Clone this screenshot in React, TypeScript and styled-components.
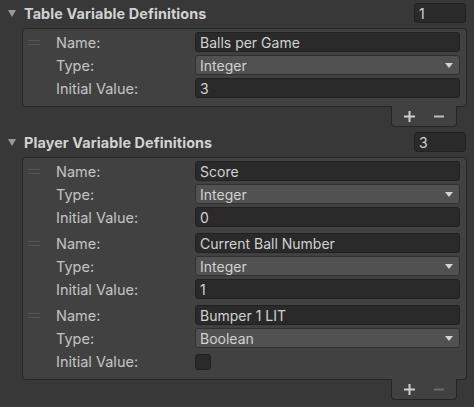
import React from 'react';
import styled, { createGlobalStyle } from 'styled-components';

type VarType = 'Integer' | 'Boolean';

interface Variable {
  name: string;
  type: VarType;
  value: string | boolean;
}

const tableVars: Variable[] = [
  { name: 'Balls per Game', type: 'Integer', value: '3' },
];

const playerVars: Variable[] = [
  { name: 'Score', type: 'Integer', value: '0' },
  { name: 'Current Ball Number', type: 'Integer', value: '1' },
  { name: 'Bumper 1 LIT', type: 'Boolean', value: false },
];

const GlobalStyle = createGlobalStyle`
  html, body {
    margin: 0;
    padding: 0;
    background: #383838;
  }
  body {
    font-family: Inter, "Noto Sans", "Liberation Sans", sans-serif;
    font-size: 14px;
    color: #c4c4c4;
  }
`;

const Foldout: React.FC = () => (
  <svg width="8" height="7" viewBox="0 0 8 7">
    <polygon points="0,0 8,0 4,7" fill="#9a9a9a" />
  </svg>
);

const Handle: React.FC = () => (
  <svg width="12" height="5" viewBox="0 0 12 5">
    <rect x="0" y="0" width="12" height="1" fill="#575757" />
    <rect x="0" y="4" width="12" height="1" fill="#575757" />
  </svg>
);

const Caret: React.FC = () => (
  <svg width="8" height="5" viewBox="0 0 8 5">
    <polygon points="0,0 8,0 4,5" fill="#d4d4d4" />
  </svg>
);

const PlusIcon: React.FC<{ color: string }> = ({ color }) => (
  <svg width="11" height="11" viewBox="0 0 11 11">
    <rect x="0" y="4.5" width="11" height="2" fill={color} />
    <rect x="4.5" y="0" width="2" height="11" fill={color} />
  </svg>
);

const MinusIcon: React.FC<{ color: string }> = ({ color }) => (
  <svg width="10" height="11" viewBox="0 0 10 11">
    <rect x="0" y="4.5" width="10" height="2" fill={color} />
  </svg>
);

const VariableList: React.FC<{ title: string; items: Variable[]; canRemove: boolean }> = ({
  title,
  items,
  canRemove,
}) => (
  <Section>
    <Header>
      <FoldoutIcon>
        <Foldout />
      </FoldoutIcon>
      <HeaderTitle>{title}</HeaderTitle>
      <CountField>{items.length}</CountField>
    </Header>
    <ListBody>
      {items.map((item) => (
        <Element key={item.name}>
          <HandleCell>
            <Handle />
          </HandleCell>
          <Label>Name:</Label>
          <TextField>{item.name}</TextField>
          <span />
          <Label>Type:</Label>
          <Dropdown>
            <span>{item.type}</span>
            <Caret />
          </Dropdown>
          <span />
          <Label>Initial Value:</Label>
          {item.type === 'Boolean' ? (
            <CheckCell>
              <Checkbox />
            </CheckCell>
          ) : (
            <TextField>{item.value as string}</TextField>
          )}
        </Element>
      ))}
    </ListBody>
    <FooterRow>
      <Footer>
        <FooterButton>
          <PlusIcon color="#cfcfcf" />
        </FooterButton>
        <FooterButton>
          <MinusIcon color={canRemove ? '#bdbdbd' : '#6c6c6c'} />
        </FooterButton>
      </Footer>
    </FooterRow>
  </Section>
);

const App: React.FC = () => (
  <>
    <GlobalStyle />
    <Inspector>
      <VariableList title="Table Variable Definitions" items={tableVars} canRemove />
      <VariableList title="Player Variable Definitions" items={playerVars} canRemove={false} />
    </Inspector>
  </>
);

export default App;

const Inspector = styled.div`
  width: 474px;
  height: 407px;
  box-sizing: border-box;
  padding: 3px 7px 0 0;
  display: flex;
  flex-direction: column;
  gap: 5px;
  overflow: hidden;
`;

const Section = styled.section`
  display: flex;
  flex-direction: column;
`;

const Header = styled.div`
  height: 20px;
  display: flex;
  align-items: center;
  margin-bottom: 5px;
`;

const FoldoutIcon = styled.div`
  width: 8px;
  margin-left: 8px;
  margin-right: 8px;
  display: flex;
  align-items: center;
  padding-top: 1px;
`;

const HeaderTitle = styled.div`
  flex: 1;
  font-weight: 700;
  font-size: 14.4px;
  color: #d2d2d2;
  letter-spacing: 0.1px;
`;

const CountField = styled.div`
  width: 52px;
  height: 20px;
  box-sizing: border-box;
  margin-right: 1px;
  padding: 0 4px;
  background: #2a2a2a;
  border: 1px solid #212121;
  border-radius: 3px;
  color: #d2d2d2;
  display: flex;
  align-items: center;
`;

const ListBody = styled.div`
  margin-left: 22px;
  background: #414141;
  border: 1px solid #252525;
  border-radius: 4px;
  padding-bottom: 5px;
`;

const Element = styled.div`
  display: grid;
  grid-template-columns: 33px 139px 1fr;
  grid-auto-rows: 20px;
  row-gap: 3px;
  padding: 3px 6px 3px 0;
  align-items: center;
`;

const HandleCell = styled.div`
  display: flex;
  justify-content: flex-start;
  padding-left: 5px;
  align-items: center;
`;

const Label = styled.div`
  color: #c4c4c4;
  font-size: 14.5px;
  white-space: nowrap;
`;

const TextField = styled.div`
  height: 20px;
  box-sizing: border-box;
  padding: 0 4px;
  background: #2a2a2a;
  border: 1px solid #212121;
  border-radius: 3px;
  color: #d2d2d2;
  display: flex;
  align-items: center;
  white-space: nowrap;
  overflow: hidden;
`;

const Dropdown = styled.div`
  height: 20px;
  box-sizing: border-box;
  padding: 0 6px 0 4px;
  background: #515151;
  border: 1px solid #303030;
  border-radius: 3px;
  color: #d2d2d2;
  display: flex;
  align-items: center;
  justify-content: space-between;
`;

const CheckCell = styled.div`
  display: flex;
  align-items: center;
  padding-top: 1px;
`;

const Checkbox = styled.div`
  width: 16px;
  height: 16px;
  box-sizing: border-box;
  background: #2a2a2a;
  border: 1px solid #212121;
  border-radius: 3px;
`;

const FooterRow = styled.div`
  display: flex;
  justify-content: flex-end;
  padding-right: 10px;
`;

const Footer = styled.div`
  width: 66px;
  height: 21px;
  box-sizing: border-box;
  margin-top: -1px;
  background: #414141;
  border: 1px solid #252525;
  border-top: none;
  border-radius: 0 0 4px 4px;
  display: flex;
  align-items: center;
  justify-content: center;
  gap: 4px;
`;

const FooterButton = styled.div`
  width: 25px;
  height: 18px;
  display: flex;
  align-items: center;
  justify-content: center;
`;
